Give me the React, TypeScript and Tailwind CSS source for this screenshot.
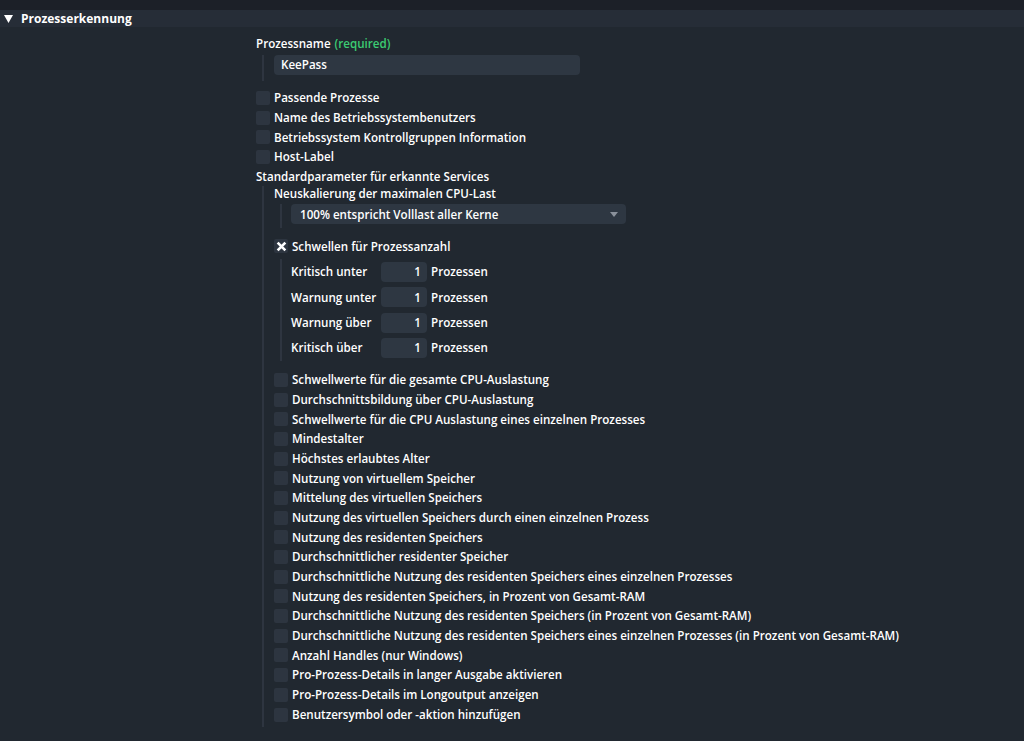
import { ReactNode } from "react";

const topOptions = [
  "Passende Prozesse",
  "Name des Betriebssystembenutzers",
  "Betriebssystem Kontrollgruppen Information",
  "Host-Label",
];

const moreOptions = [
  "Schwellwerte für die gesamte CPU-Auslastung",
  "Durchschnittsbildung über CPU-Auslastung",
  "Schwellwerte für die CPU Auslastung eines einzelnen Prozesses",
  "Mindestalter",
  "Höchstes erlaubtes Alter",
  "Nutzung von virtuellem Speicher",
  "Mittelung des virtuellen Speichers",
  "Nutzung des virtuellen Speichers durch einen einzelnen Prozess",
  "Nutzung des residenten Speichers",
  "Durchschnittlicher residenter Speicher",
  "Durchschnittliche Nutzung des residenten Speichers eines einzelnen Prozesses",
  "Nutzung des residenten Speichers, in Prozent von Gesamt-RAM",
  "Durchschnittliche Nutzung des residenten Speichers (in Prozent von Gesamt-RAM)",
  "Durchschnittliche Nutzung des residenten Speichers eines einzelnen Prozesses (in Prozent von Gesamt-RAM)",
  "Anzahl Handles (nur Windows)",
  "Pro-Prozess-Details in langer Ausgabe aktivieren",
  "Pro-Prozess-Details im Longoutput anzeigen",
  "Benutzersymbol oder -aktion hinzufügen",
];

const thresholds = ["Kritisch unter", "Warnung unter", "Warnung über", "Kritisch über"];

function CheckRow({ label, checked }: { label: string; checked?: boolean }) {
  return (
    <div className="flex h-[19.7px] items-center gap-[4px]">
      <span className="flex h-[14px] w-[14px] shrink-0 items-center justify-center rounded-[2px] bg-[#2d3540]">
        {checked && (
          <svg width="11" height="11" viewBox="0 0 10 10">
            <path d="M1.5 1.5 L8.5 8.5 M8.5 1.5 L1.5 8.5" stroke="#ffffff" strokeWidth="2.4" />
          </svg>
        )}
      </span>
      <span className="whitespace-nowrap">{label}</span>
    </div>
  );
}

function Nest({ children, className = "", pad = "pl-[10px]" }: { children: ReactNode; className?: string; pad?: string }) {
  return <div className={`ml-[6px] border-l-2 border-[#2e3540] ${pad} ${className}`}>{children}</div>;
}

export default function App() {
  return (
    <div
      className="h-[741px] w-full overflow-hidden bg-[#212830] text-[11.6px] font-semibold text-white"
      style={{ fontFamily: '"Open Sans", "Noto Sans", sans-serif' }}
    >
      <div className="h-[10px] bg-[#1c2028]" />
      <div className="flex h-[17px] items-center gap-[8px] bg-[#262d37] pl-[4px] text-[12px] font-bold">
        <svg width="9" height="8" viewBox="0 0 9 8">
          <path d="M0 0 H9 L4.5 8 Z" fill="#ffffff" />
        </svg>
        <span>Prozesserkennung</span>
      </div>

      <div className="pl-[256px] pt-[10px]">
        <div className="flex h-[14px] items-center">
          Prozessname <span className="ml-[4px] text-[#3ccb72]">(required)</span>
        </div>
        <Nest className="mt-[4px] h-[26px]">
          <div className="flex h-[20px] w-[306px] items-center rounded-[4px] bg-[#2e3742] pl-[7px]">KeePass</div>
        </Nest>

        <div className="mt-[7px]">
          {topOptions.map((o) => (
            <CheckRow key={o} label={o} />
          ))}
          <div className="flex h-[19.7px] items-center">Standardparameter für erkannte Services</div>
        </div>

        <Nest className="pb-[3px]">
          <div className="flex h-[14px] items-center">Neuskalierung der maximalen CPU-Last</div>
          <Nest className="mt-[4px] pb-[4px]" pad="pl-[9px]">
            <div className="flex h-[20px] w-[335px] items-center justify-between rounded-[4px] bg-[#2e3742] pl-[9px] pr-[8px]">
              <span>100% entspricht Volllast aller Kerne</span>
              <svg width="8" height="5" viewBox="0 0 8 5">
                <path d="M0 0 H8 L4 5 Z" fill="#8a919b" />
              </svg>
            </div>
          </Nest>

          <div className="mt-[8px]">
            <CheckRow label="Schwellen für Prozessanzahl" checked />
          </div>
          <Nest className="mt-[3px] flex flex-col gap-[5.3px] py-[3px]" pad="pl-[9px]">
            {thresholds.map((t) => (
              <div key={t} className="flex h-[20px] items-center">
                <span className="w-[90px]">{t}</span>
                <span className="flex h-[20px] w-[46px] items-center justify-end rounded-[4px] bg-[#2e3742] pr-[6px]">1</span>
                <span className="ml-[4px]">Prozessen</span>
              </div>
            ))}
          </Nest>

          <div className="mt-[9px]">
            {moreOptions.map((o) => (
              <CheckRow key={o} label={o} />
            ))}
          </div>
        </Nest>
      </div>
    </div>
  );
}
